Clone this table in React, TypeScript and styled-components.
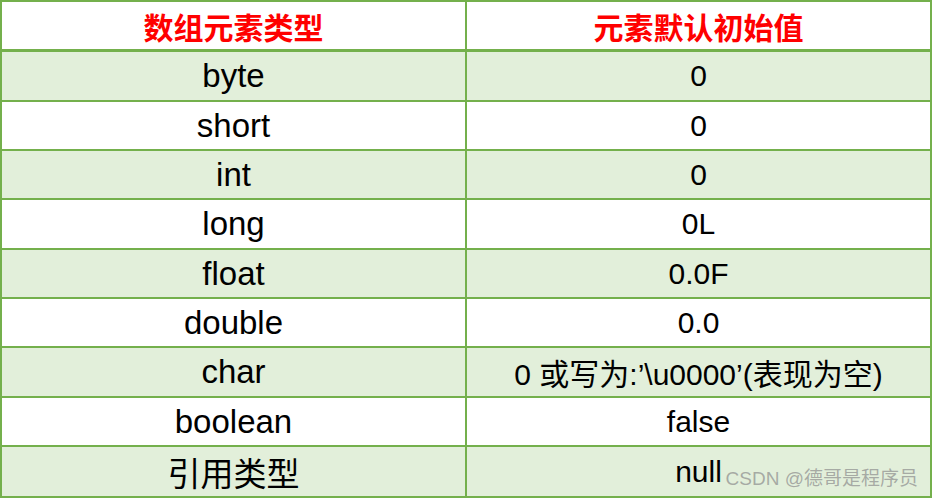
import React from "react";
import styled, { createGlobalStyle } from "styled-components";

const GlobalStyle = createGlobalStyle`
  html, body {
    margin: 0;
    padding: 0;
    background: #ffffff;
  }
`;

const GREEN = "#74b04c";

const Page = styled.div`
  position: relative;
  width: 933px;
  height: 498px;
  overflow: hidden;
  background: #ffffff;
`;

const Table = styled.div`
  box-sizing: border-box;
  width: 932px;
  height: 498px;
  display: flex;
  flex-direction: column;
  border: 2px solid ${GREEN};
`;

const Row = styled.div<{ $shaded?: boolean; $head?: boolean }>`
  flex: 1;
  display: grid;
  grid-template-columns: 465px 1fr;
  background: ${(p) => (p.$shaded ? "#e2efda" : "#ffffff")};
  border-bottom: ${(p) => (p.$head ? "3px" : "2px")} solid ${GREEN};

  &:last-child {
    border-bottom: none;
  }
`;

const Cell = styled.div<{ $side: "left" | "right"; $head?: boolean }>`
  box-sizing: border-box;
  display: flex;
  align-items: center;
  justify-content: center;
  white-space: nowrap;
  border-right: ${(p) => (p.$side === "left" ? `2px solid ${GREEN}` : "none")};
  font-family: "Liberation Sans", "Noto Sans CJK SC", sans-serif;
  font-size: ${(p) => (p.$head ? "30px" : p.$side === "left" ? "33px" : "30px")};
  font-weight: ${(p) => (p.$head ? 700 : 400)};
  color: ${(p) => (p.$head ? "#ff0000" : "#000000")};
  padding-top: ${(p) => (p.$head ? "0" : "1px")};
`;

const Watermark = styled.div`
  position: absolute;
  right: 15px;
  bottom: 8px;
  font-family: "Liberation Sans", "Noto Sans CJK SC", sans-serif;
  font-size: 19px;
  color: rgba(140, 140, 140, 0.7);
  white-space: nowrap;
`;

const rows: [string, string][] = [
  ["byte", "0"],
  ["short", "0"],
  ["int", "0"],
  ["long", "0L"],
  ["float", "0.0F"],
  ["double", "0.0"],
  ["char", "0 或写为:’\\u0000’(表现为空)"],
  ["boolean", "false"],
  ["引用类型", "null"],
];

const App = () => {
  return (
    <Page>
      <GlobalStyle />
      <Table>
        <Row $head>
          <Cell $side="left" $head>
            数组元素类型
          </Cell>
          <Cell $side="right" $head>
            元素默认初始值
          </Cell>
        </Row>
        {rows.map(([type, value], i) => (
          <Row key={type} $shaded={i % 2 === 0}>
            <Cell $side="left">{type}</Cell>
            <Cell $side="right">{value}</Cell>
          </Row>
        ))}
      </Table>
      <Watermark>CSDN @德哥是程序员</Watermark>
    </Page>
  );
};

export default App;
